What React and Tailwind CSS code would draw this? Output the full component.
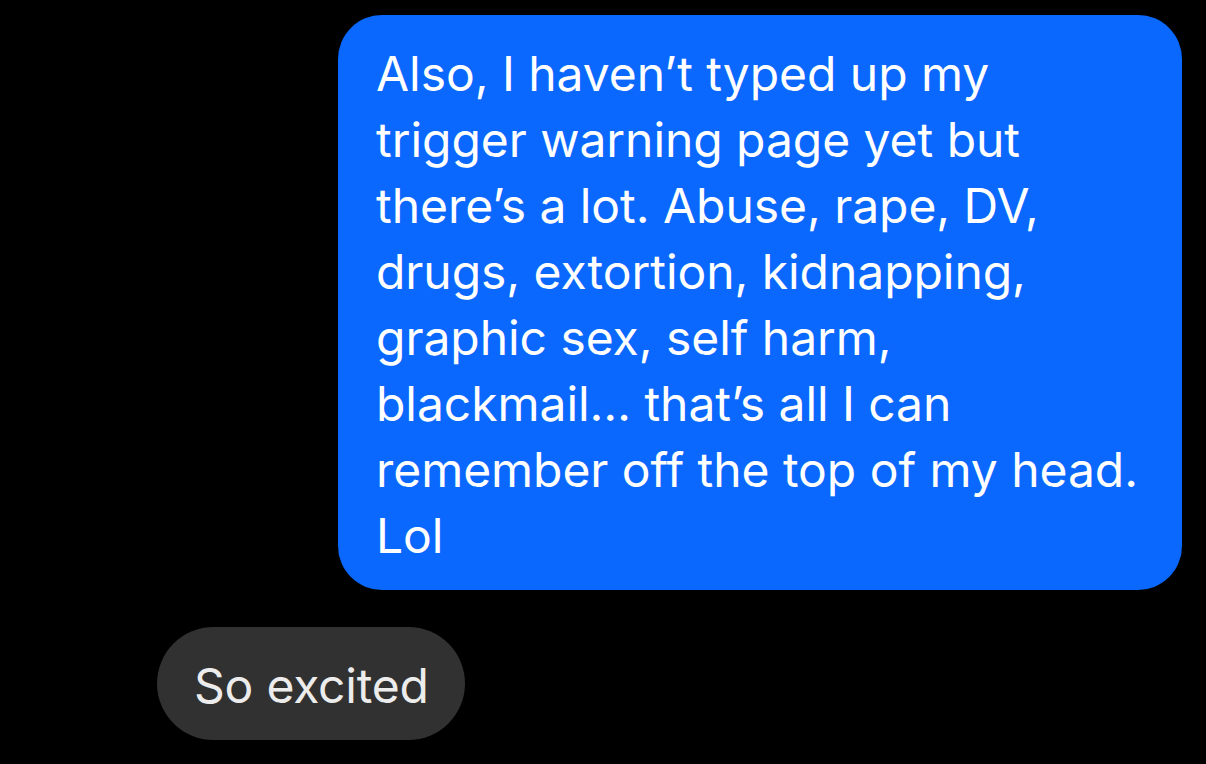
export default function App() {
  const lines = [
    "Also, I haven\u2019t typed up my",
    "trigger warning page yet but",
    "there\u2019s a lot. Abuse, rape, DV,",
    "drugs, extortion, kidnapping,",
    "graphic sex, self harm,",
    "blackmail\u2026 that\u2019s all I can",
    "remember off the top of my head.",
    "Lol",
  ];
  return (
    <div
      className="w-[1206px] h-[764px] bg-black overflow-hidden flex flex-col"
      style={{ fontFamily: "Inter, 'Noto Sans', 'Liberation Sans', sans-serif" }}
    >
      <div className="ml-[338px] mt-[15px] w-[844px] h-[575px] rounded-[44px] bg-[#0a68fe] pl-[38px] pt-[26px] text-white text-[48px] leading-[66px] tracking-[-0.05px]">
        {lines.map((l, i) => (
          <div key={i} className="whitespace-nowrap">{l}</div>
        ))}
      </div>
      <div className="ml-[157px] mt-[37px] w-[308px] h-[113px] rounded-full bg-[#313131] pl-[37px] pt-[26px] text-[#ececec] text-[48px] leading-[66px] tracking-[-0.2px] whitespace-nowrap">
        So excited
      </div>
    </div>
  );
}
